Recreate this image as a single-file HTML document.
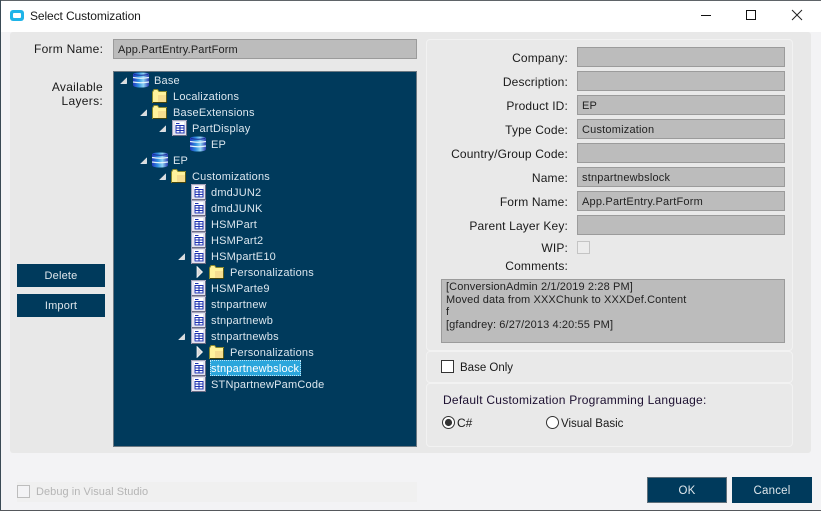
<!DOCTYPE html>
<html><head><meta charset="utf-8"><style>
html,body{margin:0;padding:0;width:821px;height:511px;overflow:hidden}
body{position:relative;background:#f3f3f5;font-family:"Liberation Sans",Arial,sans-serif;font-size:12px;color:#1a1a1a}
div,span{position:absolute;box-sizing:border-box;white-space:nowrap}
svg{position:absolute;overflow:visible}
.panel{background:#e9e9e9;border:1px solid #f2f2f2;border-radius:4px}
.field{background:#bcbcbc;border:1px solid #9b9b9b;height:20px;line-height:20px;padding-left:4px;color:#222;font-size:11px;letter-spacing:.2px}
.lbl{right:253px;text-align:right;line-height:16px;letter-spacing:.15px}
.t{color:#dbe6ee;font-size:11px;line-height:18px;letter-spacing:.2px}
.btn{background:#003a5c;border:1px solid #5f6f7a;color:#dfe7ec;text-align:center;font-size:11.5px;letter-spacing:.2px}
</style></head><body>
<svg width="0" height="0" style="position:absolute"><defs>
<linearGradient id="db" x1="0" x2="1" y1="0" y2="0"><stop offset="0" stop-color="#2238c0"/><stop offset=".35" stop-color="#2f8fe0"/><stop offset=".65" stop-color="#8fd4f4"/><stop offset="1" stop-color="#2a3bb0"/></linearGradient>
<symbol id="dbi" viewBox="0 0 16 16"><path d="M0 2.5Q0 .5 8 .5T16 2.5V13Q16 15.5 8 15.5T0 13Z" fill="url(#db)"/><path d="M0 5.5Q8 7 16 5.5M0 10Q8 11.5 16 10" fill="none" stroke="#e4f4fb" stroke-width="1.3"/><path d="M1 2.5Q8 4 15 2.5" fill="none" stroke="#1a2f9a" stroke-width="1"/></symbol>
<symbol id="fol" viewBox="0 0 15 14"><path d="M.5 3V13.5H14.5V2.5H7L5.5.5H2L.5 3Z" fill="#fff29c" stroke="#8a8a30"/><rect x="6" y="6" width="8" height="7" fill="#f2d48c" opacity=".7"/><path d="M1 13.7H15V3" fill="none" stroke="#2e2e00"/></symbol>
<symbol id="doc" viewBox="0 0 15 16"><rect x=".5" y=".5" width="14" height="15" fill="#e4e4f0" stroke="#a4a4bc"/><path d="M1 15.5H14.5V1" fill="none" stroke="#6c6c84"/><rect x="3" y="2" width="9" height="12" fill="#fff"/><path d="M4 3.5h3.5M4 5.5H12V13H4ZM4 8H12M4 10.5H12M8 5.5V13" fill="none" stroke="#1b2fb0"/></symbol>
<symbol id="down" viewBox="0 0 7 7"><path d="M6.5 .8V6.5H.6Z" fill="#dcdcdc"/><path d="M6.5 .8V6.5H.6" fill="none" stroke="#fff" stroke-width=".7"/></symbol>
<symbol id="right" viewBox="0 0 7 12"><path d="M1 .5L6.5 6 1 11.5Z" fill="#d8d8d8" stroke="#fff" stroke-width=".7"/></symbol>
</defs></svg>

<div style="left:0;top:0;width:821px;height:32px;background:#fff"></div>
<div style="left:10px;top:10px;width:14px;height:11px;background:#1fb4e8;border-radius:3px"></div>
<div style="left:13px;top:13px;width:8px;height:5px;background:#fff;border-radius:1px"></div>
<div style="left:30px;top:8px;line-height:16px;font-size:12px;letter-spacing:-.1px">Select Customization</div>
<svg style="left:700px;top:10px" width="110" height="12"><path d="M1 5.5H11" stroke="#111"/><rect x="46.5" y=".5" width="9" height="9" fill="none" stroke="#111"/><path d="M92 0L102 10M102 0L92 10" stroke="#222"/></svg>

<div style="left:10px;top:32px;width:801px;height:421px;background:#e8e8e8;border-radius:3px"></div>

<div class="lbl" style="right:auto;left:34px;top:41px;letter-spacing:.25px">Form Name:</div>
<div class="field" style="left:113px;top:39px;width:304px;letter-spacing:.15px">App.PartEntry.PartForm</div>
<div style="left:30px;top:80px;width:73px;text-align:right;line-height:14px;white-space:normal;letter-spacing:.3px">Available Layers:</div>

<div style="left:113px;top:71px;width:304px;height:376px;background:#003a5c;border:1px solid #6b7882"></div>

<svg width="7" height="7" style="left:120px;top:77px"><use href="#down"/></svg>
<svg width="7" height="7" style="left:140px;top:109px"><use href="#down"/></svg>
<svg width="7" height="7" style="left:159px;top:125px"><use href="#down"/></svg>
<svg width="7" height="7" style="left:140px;top:157px"><use href="#down"/></svg>
<svg width="7" height="7" style="left:159px;top:173px"><use href="#down"/></svg>
<svg width="7" height="7" style="left:178px;top:253px"><use href="#down"/></svg>
<svg width="7" height="7" style="left:178px;top:333px"><use href="#down"/></svg>
<svg width="7" height="12" style="left:196px;top:266px"><use href="#right"/></svg>
<svg width="7" height="12" style="left:196px;top:346px"><use href="#right"/></svg>

<svg width="16" height="16" style="left:133px;top:72px"><use href="#dbi"/></svg>
<svg width="15" height="14" style="left:152px;top:89px"><use href="#fol"/></svg>
<svg width="15" height="14" style="left:152px;top:105px"><use href="#fol"/></svg>
<svg width="15" height="16" style="left:172px;top:120px"><use href="#doc"/></svg>
<svg width="16" height="16" style="left:190px;top:136px"><use href="#dbi"/></svg>
<svg width="16" height="16" style="left:152px;top:152px"><use href="#dbi"/></svg>
<svg width="15" height="14" style="left:171px;top:169px"><use href="#fol"/></svg>
<svg width="15" height="16" style="left:191px;top:184px"><use href="#doc"/></svg>
<svg width="15" height="16" style="left:191px;top:200px"><use href="#doc"/></svg>
<svg width="15" height="16" style="left:191px;top:216px"><use href="#doc"/></svg>
<svg width="15" height="16" style="left:191px;top:232px"><use href="#doc"/></svg>
<svg width="15" height="16" style="left:191px;top:248px"><use href="#doc"/></svg>
<svg width="15" height="14" style="left:209px;top:265px"><use href="#fol"/></svg>
<svg width="15" height="16" style="left:191px;top:280px"><use href="#doc"/></svg>
<svg width="15" height="16" style="left:191px;top:296px"><use href="#doc"/></svg>
<svg width="15" height="16" style="left:191px;top:312px"><use href="#doc"/></svg>
<svg width="15" height="16" style="left:191px;top:328px"><use href="#doc"/></svg>
<svg width="15" height="14" style="left:209px;top:345px"><use href="#fol"/></svg>
<svg width="15" height="16" style="left:191px;top:360px"><use href="#doc"/></svg>
<svg width="15" height="16" style="left:191px;top:376px"><use href="#doc"/></svg>

<div style="left:210px;top:360px;width:91px;height:16px;background:#2ba6dc;border:1px dotted #bfe6f6"></div>

<div class="t" style="left:154px;top:72px">Base</div>
<div class="t" style="left:173px;top:88px">Localizations</div>
<div class="t" style="left:173px;top:104px">BaseExtensions</div>
<div class="t" style="left:192px;top:120px">PartDisplay</div>
<div class="t" style="left:211px;top:136px">EP</div>
<div class="t" style="left:173px;top:152px">EP</div>
<div class="t" style="left:192px;top:168px">Customizations</div>
<div class="t" style="left:211px;top:184px">dmdJUN2</div>
<div class="t" style="left:211px;top:200px">dmdJUNK</div>
<div class="t" style="left:211px;top:216px">HSMPart</div>
<div class="t" style="left:211px;top:232px">HSMPart2</div>
<div class="t" style="left:211px;top:248px">HSMpartE10</div>
<div class="t" style="left:230px;top:264px">Personalizations</div>
<div class="t" style="left:211px;top:280px">HSMParte9</div>
<div class="t" style="left:211px;top:296px">stnpartnew</div>
<div class="t" style="left:211px;top:312px">stnpartnewb</div>
<div class="t" style="left:211px;top:328px">stnpartnewbs</div>
<div class="t" style="left:230px;top:344px">Personalizations</div>
<div class="t" style="left:211px;top:360px;color:#fff">stnpartnewbslock</div>
<div class="t" style="left:211px;top:376px">STNpartnewPamCode</div>

<div class="btn" style="left:17px;top:264px;width:88px;height:23px;line-height:24px;border:0;font-size:11px">Delete</div>
<div class="btn" style="left:17px;top:294px;width:88px;height:23px;line-height:24px;border:0;font-size:11px">Import</div>

<div class="panel" style="left:426px;top:39px;width:367px;height:312px"></div>
<div class="panel" style="left:426px;top:351px;width:367px;height:32px"></div>
<div class="panel" style="left:426px;top:383px;width:367px;height:64px"></div>

<div class="lbl" style="top:50px">Company:</div>
<div class="lbl" style="top:74px">Description:</div>
<div class="lbl" style="top:98px">Product ID:</div>
<div class="lbl" style="top:122px">Type Code:</div>
<div class="lbl" style="top:146px">Country/Group Code:</div>
<div class="lbl" style="top:170px">Name:</div>
<div class="lbl" style="top:194px">Form Name:</div>
<div class="lbl" style="top:218px">Parent Layer Key:</div>
<div class="lbl" style="top:240px">WIP:</div>
<div class="lbl" style="top:258px">Comments:</div>

<div class="field" style="left:577px;top:47px;width:208px"></div>
<div class="field" style="left:577px;top:71px;width:208px"></div>
<div class="field" style="left:577px;top:95px;width:208px">EP</div>
<div class="field" style="left:577px;top:119px;width:208px">Customization</div>
<div class="field" style="left:577px;top:143px;width:208px"></div>
<div class="field" style="left:577px;top:167px;width:208px">stnpartnewbslock</div>
<div class="field" style="left:577px;top:191px;width:208px">App.PartEntry.PartForm</div>
<div class="field" style="left:577px;top:215px;width:208px"></div>
<div style="left:577px;top:241px;width:13px;height:13px;background:#ececec;border:1px solid #c4c4c4"></div>

<div style="left:441px;top:279px;width:344px;height:64px;background:#bcbcbc;border:1px solid #9b9b9b;padding:1px 4px 0;font-size:11px;line-height:12.5px;color:#222;letter-spacing:.12px">[ConversionAdmin 2/1/2019 2:28 PM]<br>Moved data from XXXChunk to XXXDef.Content<br>f<br>[gfandrey: 6/27/2013 4:20:55 PM]</div>

<div style="left:441px;top:360px;width:13px;height:13px;background:#fff;border:1px solid #333"></div>
<div style="left:460px;top:360px;line-height:16px;font-size:11.5px">Base Only</div>

<div style="left:443px;top:392px;line-height:16px;letter-spacing:.25px;color:#1c0f30">Default Customization Programming Language:</div>
<svg width="14" height="14" style="left:442px;top:416px"><circle cx="6.5" cy="6.5" r="6" fill="#fff" stroke="#333"/><circle cx="6.5" cy="6.5" r="3.6" fill="#333"/></svg>
<div style="left:457px;top:415px;line-height:16px">C#</div>
<svg width="14" height="14" style="left:546px;top:416px"><circle cx="6.5" cy="6.5" r="6" fill="#fff" stroke="#333"/></svg>
<div style="left:561px;top:416px;line-height:16px;font-size:11.5px">Visual Basic</div>

<div style="left:17px;top:482px;width:400px;height:20px;background:#f0f0f0"></div>
<div style="left:17px;top:485px;width:13px;height:13px;border:1px solid #bdbdbd;background:#f3f3f5"></div>
<div style="left:36px;top:484px;line-height:16px;color:#b5b5b5;font-size:11px;letter-spacing:.05px">Debug in Visual Studio</div>

<div class="btn" style="left:647px;top:477px;width:80px;height:26px;line-height:26px">OK</div>
<div class="btn" style="left:732px;top:477px;width:80px;height:26px;border:0;line-height:28px">Cancel</div>

<div style="left:0;top:0;width:821px;height:1px;background:#5f6468"></div>
<div style="left:0;top:0;width:1px;height:511px;background:#3a4a55"></div>
<div style="left:0;top:510px;width:821px;height:1px;background:#55585c"></div>
</body></html>
